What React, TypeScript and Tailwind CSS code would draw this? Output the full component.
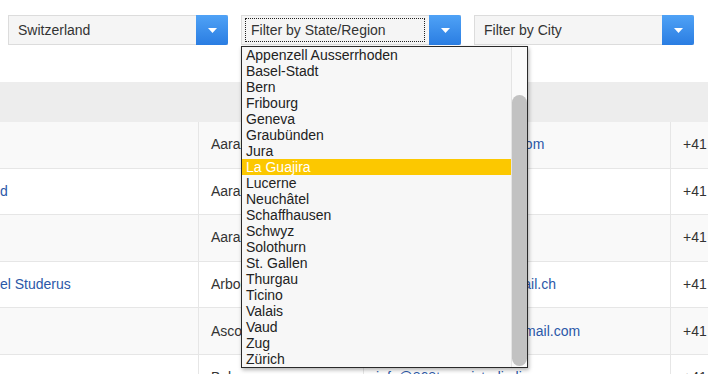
import React from 'react';

const regions = [
  'Appenzell Ausserrhoden',
  'Basel-Stadt',
  'Bern',
  'Fribourg',
  'Geneva',
  'Graubünden',
  'Jura',
  'La Guajira',
  'Lucerne',
  'Neuchâtel',
  'Schaffhausen',
  'Schwyz',
  'Solothurn',
  'St. Gallen',
  'Thurgau',
  'Ticino',
  'Valais',
  'Vaud',
  'Zug',
  'Zürich',
];

const rows = [
  { name: '', city: 'Aarau', email: 'reception@hotelaarau.com', phone: '+41 62 822 11 22' },
  { name: 'd', city: 'Aarau', email: '', phone: '+41 62 824 40 20' },
  { name: '', city: 'Aarau', email: '', phone: '+41 62 836 90 00' },
  { name: 'el Studerus', city: 'Arbon', email: 'daniel.studerus@bluemail.ch', phone: '+41 71 446 12 34' },
  { name: '', city: 'Ascona', email: 'ristorantes.ascona@hotmail.com', phone: '+41 91 791 11 55' },
  { name: '', city: 'Balerna', email: 'info@868tauanistudio.li', phone: '+41 91 683 20 20' },
];

function Caret() {
  return (
    <svg width="9" height="5" viewBox="0 0 9 5">
      <path d="M0 0h9L4.5 5z" fill="#fff" />
    </svg>
  );
}

function Select({ label, focused }: { label: string; focused?: boolean }) {
  return (
    <div className="relative flex h-[30px] w-[220px] border border-[#dcdcdc] bg-[#f5f5f5]">
      <div className="flex flex-1 items-center pl-[9px]">
        {focused && (
          <div className="absolute left-[3px] top-[2px] h-[24px] w-[180px] border border-dotted border-[#222]" />
        )}
        <span>{label}</span>
      </div>
      <div className="-my-px -mr-px flex w-[32px] items-center justify-center rounded-r-[2px] bg-gradient-to-b from-[#4fa2f6] to-[#2a7de2]">
        <Caret />
      </div>
    </div>
  );
}

export default function App() {
  return (
    <div className="relative h-[374px] w-[708px] overflow-hidden bg-white font-['Liberation_Sans',Arial,sans-serif] text-[14px] text-[#333]">
      <div className="flex gap-[13px] pl-2 pt-[15px]">
        <Select label="Switzerland" />
        <Select label="Filter by State/Region" focused />
        <Select label="Filter by City" />
      </div>

      <div className="mt-[37px]">
        <div className="h-[40px] bg-[#ededed]" />
        {rows.map((r, i) => (
          <div
            key={i}
            className={`grid h-[46.6px] grid-cols-[198px_165px_307px_1fr] border-b border-[#e6e6e6] ${
              i % 2 === 0 ? 'bg-[#f9f9f9]' : 'bg-white'
            }`}
          >
            <div className="flex items-center whitespace-nowrap text-[#2b58a8]">{r.name}</div>
            <div className="flex items-center whitespace-nowrap border-l border-[#e6e6e6] pl-3">{r.city}</div>
            <div className="flex items-center whitespace-nowrap border-l border-[#e6e6e6] pl-3 text-[#2b58a8]">
              {r.email}
            </div>
            <div className="flex items-center overflow-hidden whitespace-nowrap border-l border-[#e6e6e6] pl-3">
              {r.phone}
            </div>
          </div>
        ))}
      </div>

      <div className="absolute left-[241px] top-[46px] flex h-[322px] w-[287px] border border-[#2a2a2a] bg-[#f7f7f7] text-[14px] text-[#222] shadow-[1px_2px_4px_rgba(0,0,0,0.3)]">
        <ul className="flex-1">
          {regions.map((r) => (
            <li
              key={r}
              className={`h-[16px] pl-1 leading-[16px] ${r === 'La Guajira' ? 'bg-[#fcc800] text-white' : ''}`}
            >
              {r}
            </li>
          ))}
        </ul>
        <div className="flex w-[16px] justify-center border-l border-[#e4e4e4] bg-[#fafafa] pt-[48px] pb-[1px]">
          <div className="w-[7px] flex-1 rounded-full bg-[#c2c2c2]" />
        </div>
      </div>
    </div>
  );
}
